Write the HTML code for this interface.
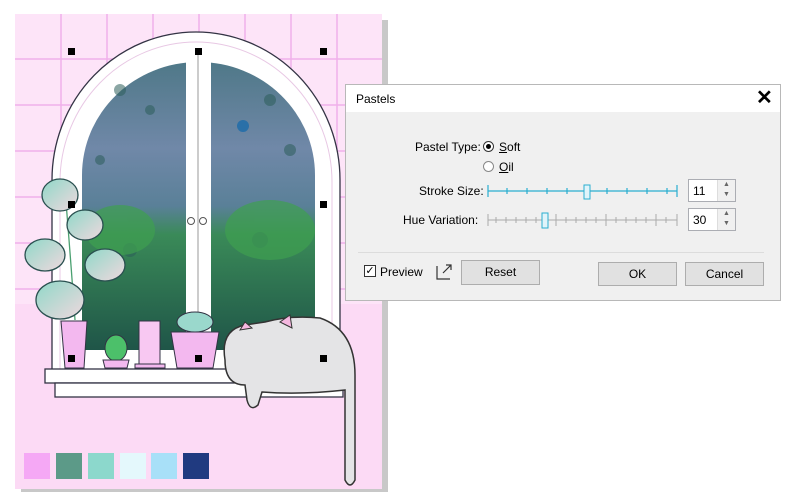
<!DOCTYPE html>
<html><head><meta charset="utf-8"><style>
body{margin:0;width:793px;height:498px;background:#fff;position:relative;overflow:hidden;font-family:"Liberation Sans",sans-serif;}
.dlg{position:absolute;left:345px;top:84px;width:436px;height:217px;background:#f0f0f0;border:1px solid #b8b8b8;box-sizing:border-box;font-size:12px;color:#000}
.t{position:absolute}
.btn{position:absolute;background:#e1e1e1;border:1px solid #adadad;box-sizing:border-box;text-align:center;line-height:23px;font-size:12px}
.spin{position:absolute;left:342px;width:48px;height:23px;background:#fff;border:1px solid #abadb3;box-sizing:border-box}
.spin span{position:absolute;left:4px;top:4px}
.spin i{position:absolute;right:0;top:0;width:17px;height:21px;background:#f0f0f0;border-left:1px solid #ddd;font-style:normal;font-size:7px;color:#666;text-align:center;line-height:10px}
</style></head><body>
<svg width="793" height="498" style="position:absolute;left:0;top:0">
<defs>
<linearGradient id="sky" x1="0" y1="0" x2="0" y2="1"><stop offset="0" stop-color="#4f7888"/><stop offset="0.3" stop-color="#7088a8"/><stop offset="0.5" stop-color="#5a8098"/><stop offset="0.6" stop-color="#3a8a58"/><stop offset="1" stop-color="#1f5548"/></linearGradient>
<linearGradient id="leaf" x1="0" y1="0" x2="1" y2="1"><stop offset="0" stop-color="#8fd8c8"/><stop offset="1" stop-color="#f0d8de"/></linearGradient>
</defs>
<rect x="21" y="20" width="367" height="472" fill="#c8c8c8"/>
<rect x="15" y="14" width="367" height="475" fill="#fcdaf5"/>
<rect x="15" y="14" width="367" height="290" fill="#fde4f8"/>
<g stroke="#f0b0ea" stroke-width="1.5" fill="none">
<path d="M15 59H382M15 105H382M15 151H382M15 197H382M15 243H382M15 289H382"/>
<path d="M61 14V300M107 14V300M153 14V300M199 14V300M245 14V300M291 14V300M337 14V300"/>
</g>
<path d="M52 370V180A144 148 0 0 1 340 180V370Z" fill="#fff" stroke="#334" stroke-width="1.3"/>
<path d="M60 370V182A136 140 0 0 1 332 182V370" fill="none" stroke="#e8c8e4" stroke-width="1"/>
<path d="M82 350V175A116.5 113 0 0 1 315 175V350Z" fill="url(#sky)"/>
<g fill="#2c5d5a" opacity="0.55"><circle cx="120" cy="90" r="6"/><circle cx="150" cy="110" r="5"/><circle cx="270" cy="100" r="6"/><circle cx="100" cy="160" r="5"/><circle cx="290" cy="150" r="6"/><circle cx="260" cy="240" r="8"/><circle cx="130" cy="250" r="7"/></g>
<g fill="#3fa050" opacity="0.7"><ellipse cx="270" cy="230" rx="45" ry="30"/><ellipse cx="120" cy="230" rx="35" ry="25"/></g>
<circle cx="243" cy="126" r="6" fill="#2a70a8"/>
<rect x="186" y="55" width="25" height="300" fill="#fff"/>
<line x1="198" y1="55" x2="198" y2="355" stroke="#999" stroke-width="1"/>
<circle cx="191" cy="221" r="3.5" fill="none" stroke="#555"/><circle cx="203" cy="221" r="3.5" fill="none" stroke="#555"/>
<rect x="45" y="369" width="300" height="14" fill="#fff" stroke="#334" stroke-width="1.3"/>
<rect x="55" y="383" width="288" height="14" fill="#fff" stroke="#334" stroke-width="1.3"/>
<g stroke="#2a5050" stroke-width="1.3">
<path d="M75 320Q70 250 65 190" fill="none" stroke="#4aa070"/>
<ellipse cx="60" cy="195" rx="18" ry="16" fill="url(#leaf)"/><ellipse cx="85" cy="225" rx="18" ry="15" fill="url(#leaf)"/>
<ellipse cx="45" cy="255" rx="20" ry="16" fill="url(#leaf)"/><ellipse cx="105" cy="265" rx="20" ry="16" fill="url(#leaf)"/>
<ellipse cx="60" cy="300" rx="24" ry="19" fill="url(#leaf)"/>
</g>
<path d="M61 321H87L84 368H65Z" fill="#f3b8ef" stroke="#334"/>
<ellipse cx="116" cy="348" rx="11" ry="13" fill="#4cc06a" stroke="#334"/>
<path d="M103 360H129L127 368H105Z" fill="#f3b8ef" stroke="#334"/>
<rect x="139" y="321" width="21" height="43" fill="#f8c8f2" stroke="#334"/>
<rect x="135" y="364" width="30" height="4" fill="#f3b8ef" stroke="#334"/>
<ellipse cx="195" cy="322" rx="18" ry="10" fill="#9ad8cc" stroke="#334"/>
<path d="M171 332H219L213 368H177Z" fill="#f3b8ef" stroke="#334"/>
<path d="M225 360Q220 330 245 325L265 322Q290 315 320 318Q355 330 355 375V480Q350 490 345 480V390Q300 395 262 392L258 405Q250 412 247 400L245 385Q225 385 225 360Z" fill="#e4e4e6" stroke="#333" stroke-width="1.5"/>
<path d="M240 330L245 322L252 328Z M280 322L290 315L292 328Z" fill="#f5b8e0" stroke="#333"/>
<rect x="24" y="453" width="26" height="26" fill="#f5a8f5"/>
<rect x="56" y="453" width="26" height="26" fill="#5c9a88"/>
<rect x="88" y="453" width="26" height="26" fill="#8cd8cc"/>
<rect x="120" y="453" width="26" height="26" fill="#e4f8fc"/>
<rect x="151" y="453" width="26" height="26" fill="#a8e0f8"/>
<rect x="183" y="453" width="26" height="26" fill="#203a80"/>
<g fill="#000"><rect x="68" y="48" width="7" height="7"/><rect x="195" y="48" width="7" height="7"/><rect x="320" y="48" width="7" height="7"/><rect x="68" y="201" width="7" height="7"/><rect x="320" y="201" width="7" height="7"/><rect x="68" y="355" width="7" height="7"/><rect x="195" y="355" width="7" height="7"/><rect x="320" y="355" width="7" height="7"/></g>
</svg>
<div class="dlg">
<div style="position:absolute;left:0;top:0;right:0;height:27px;background:#fff"></div>
<div class="t" style="left:10px;top:7px">Pastels</div>
<div class="t" style="left:410px;top:0px;font-size:20px;font-weight:bold">✕</div>
<div class="t" style="left:69px;top:55px">Pastel Type:</div>
<div class="t" style="left:137px;top:56px;width:11px;height:11px;border:1px solid #333;border-radius:50%;background:#fff;box-sizing:border-box"><div style="margin:2px;width:5px;height:5px;border-radius:50%;background:#000"></div></div>
<div class="t" style="left:153px;top:55px"><u>S</u>oft</div>
<div class="t" style="left:137px;top:76px;width:11px;height:11px;border:1px solid #888;border-radius:50%;background:#fff;box-sizing:border-box"></div>
<div class="t" style="left:153px;top:75px"><u>O</u>il</div>
<div class="t" style="left:73px;top:99px">Stroke Size:</div>
<div class="t" style="left:57px;top:128px">Hue Variation:</div>
<svg class="t" style="left:140px;top:95px" width="195" height="50">
<g stroke="#2aaed0" stroke-width="1.2"><path d="M2 11H191M2 5V17M191 5V17"/><path d="M21 8V14M41 8V14M61 8V14M81 8V14M121 8V14M141 8V14M161 8V14M181 8V14"/></g>
<rect x="98" y="5" width="6" height="14" fill="#e0f4fa" stroke="#2aaed0"/>
<g stroke="#aaa" stroke-width="1"><path d="M2 40H191M2 34V46M191 34V46"/><path d="M10 37V43M20 37V43M30 37V43M40 37V43M50 37V43M60 37V43M80 37V43M90 37V43M100 37V43M110 37V43M130 37V43M140 37V43M150 37V43M160 37V43M170 37V43M180 37V43M70 34V46M120 34V46M170 34V46"/></g>
<rect x="56" y="33" width="6" height="15" fill="#e0f4fa" stroke="#2aaed0"/>
</svg>
<div class="spin" style="top:94px"><span>11</span><i>▲<br>▼</i></div>
<div class="spin" style="top:123px"><span>30</span><i>▲<br>▼</i></div>
<div class="t" style="left:12px;top:167px;right:16px;border-top:1px solid #dcdcdc"></div>
<div class="t" style="left:18px;top:180px;width:12px;height:12px;border:1px solid #333;background:#fff;box-sizing:border-box;font-size:11px;line-height:10px;text-align:center">✓</div>
<div class="t" style="left:34px;top:180px">Preview</div>
<svg class="t" style="left:90px;top:178px" width="17" height="17"><path d="M1 3V16H14M7 10L15 2M10 2H15V7" fill="none" stroke="#333" stroke-width="1.2"/></svg>
<div class="btn" style="left:115px;top:175px;width:79px;height:25px">Reset</div>
<div class="btn" style="left:252px;top:177px;width:79px;height:24px">OK</div>
<div class="btn" style="left:339px;top:177px;width:79px;height:24px">Cancel</div>
</div>
</body></html>
